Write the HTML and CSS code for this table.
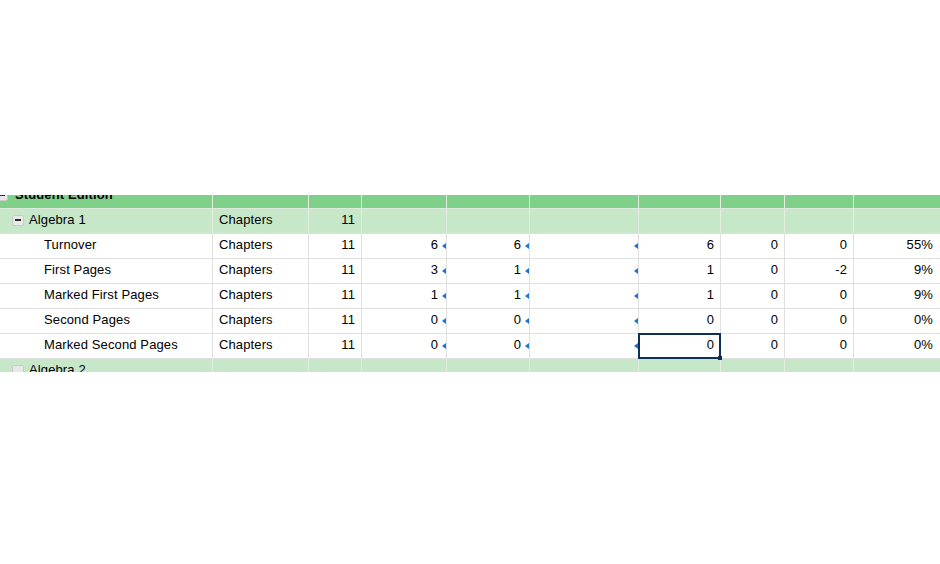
FILE: index.html
```html
<!DOCTYPE html>
<html>
<head>
<meta charset="utf-8">
<link rel="stylesheet" href="styles.css">
</head>
<body>
<div class="viewport">
  <div class="grid">
    <div class="row group1">
      <div class="c c1"><span class="lvl0"><span class="tog minus"></span><b>Student Edition</b></span></div>
      <div class="c c2"></div><div class="c c3"></div><div class="c c4"></div><div class="c c5"></div>
      <div class="c c6"></div><div class="c c7"></div><div class="c c8"></div><div class="c c9"></div><div class="c c10"></div>
    </div>
    <div class="row group2">
      <div class="c c1"><span class="lvl1"><span class="tog minus"></span>Algebra 1</span></div>
      <div class="c c2">Chapters</div><div class="c c3 num">11</div><div class="c c4"></div><div class="c c5"></div>
      <div class="c c6"></div><div class="c c7"></div><div class="c c8"></div><div class="c c9"></div><div class="c c10"></div>
    </div>
    <div class="row">
      <div class="c c1"><span class="lvl2">Turnover</span></div>
      <div class="c c2">Chapters</div><div class="c c3 num">11</div>
      <div class="c c4 num tri">6</div><div class="c c5 num tri">6</div><div class="c c6 num tri"></div>
      <div class="c c7 num">6</div><div class="c c8 num">0</div><div class="c c9 num">0</div><div class="c c10 num">55%</div>
    </div>
    <div class="row">
      <div class="c c1"><span class="lvl2">First Pages</span></div>
      <div class="c c2">Chapters</div><div class="c c3 num">11</div>
      <div class="c c4 num tri">3</div><div class="c c5 num tri">1</div><div class="c c6 num tri"></div>
      <div class="c c7 num">1</div><div class="c c8 num">0</div><div class="c c9 num">-2</div><div class="c c10 num">9%</div>
    </div>
    <div class="row">
      <div class="c c1"><span class="lvl2">Marked First Pages</span></div>
      <div class="c c2">Chapters</div><div class="c c3 num">11</div>
      <div class="c c4 num tri">1</div><div class="c c5 num tri">1</div><div class="c c6 num tri"></div>
      <div class="c c7 num">1</div><div class="c c8 num">0</div><div class="c c9 num">0</div><div class="c c10 num">9%</div>
    </div>
    <div class="row">
      <div class="c c1"><span class="lvl2">Second Pages</span></div>
      <div class="c c2">Chapters</div><div class="c c3 num">11</div>
      <div class="c c4 num tri">0</div><div class="c c5 num tri">0</div><div class="c c6 num tri"></div>
      <div class="c c7 num">0</div><div class="c c8 num">0</div><div class="c c9 num">0</div><div class="c c10 num">0%</div>
    </div>
    <div class="row">
      <div class="c c1"><span class="lvl2">Marked Second Pages</span></div>
      <div class="c c2">Chapters</div><div class="c c3 num">11</div>
      <div class="c c4 num tri">0</div><div class="c c5 num tri">0</div><div class="c c6 num tri"></div>
      <div class="c c7 num sel">0<span class="selbox"><span class="handle"></span></span></div><div class="c c8 num">0</div><div class="c c9 num">0</div><div class="c c10 num">0%</div>
    </div>
    <div class="row group2">
      <div class="c c1"><span class="lvl1"><span class="tog plus"></span>Algebra 2</span></div>
      <div class="c c2"></div><div class="c c3"></div><div class="c c4"></div><div class="c c5"></div>
      <div class="c c6"></div><div class="c c7"></div><div class="c c8"></div><div class="c c9"></div><div class="c c10"></div>
    </div>
  </div>
</div>
</body>
</html>
```
FILE: styles.css
```css
html, body {
  margin: 0;
  padding: 0;
  background: #ffffff;
}
body {
  font-family: "Liberation Sans", Arial, sans-serif;
  font-size: 13px;
  letter-spacing: 0.12px;
  color: #000000;
}
.viewport {
  margin-top: 195px;
  height: 177px;
  overflow: hidden;
}
.grid {
  margin-top: -11px;
  width: 940px;
}
.row {
  display: flex;
  height: 25px;
  box-sizing: border-box;
  border-bottom: 1px solid #e0e0e0;
  background: #ffffff;
}
.row.group1 { background: #7fd189; border-bottom-color: #dcebdc; }
.row.group2 { background: #c7e7c9; }
.c {
  box-sizing: border-box;
  height: 24px;
  line-height: 22px;
  border-right: 1px solid #e0e0e0;
  padding: 0 6px;
  white-space: nowrap;
  overflow: hidden;
  flex: none;
}
.group1 .c, .group2 .c { border-right-color: #e4ece4; }
.c1 { width: 213px; padding: 0 0 2px 0; display: flex; align-items: center; }
.c2 { width: 96px; }
.c3 { width: 53px; }
.c4 { width: 85px; }
.c5 { width: 83px; }
.c6 { width: 109px; }
.c7 { width: 82px; }
.c8 { width: 64px; }
.c9 { width: 69px; }
.c10 { flex: 1; padding-right: 7px; border-right: none; }
.num { text-align: right; }
.tri { position: relative; padding-right: 8px; }
.tri::after {
  content: "";
  position: absolute;
  right: 0;
  top: 9px;
  width: 0;
  height: 0;
  border-top: 3px solid transparent;
  border-bottom: 3px solid transparent;
  border-right: 4px solid #1a73d9;
}
.lvl0, .lvl1, .lvl2 {
  display: flex;
  align-items: center;
}
.lvl0 { margin-left: -4px; }
.lvl0 .tog { margin-right: 7px; }
.lvl1 { margin-left: 12px; }
.lvl2 { margin-left: 44px; }
.tog {
  position: relative;
  box-sizing: border-box;
  width: 12px;
  height: 11px;
  margin-right: 5px;
  margin-top: 1px;
  border: 1px solid #c9c9c9;
  border-radius: 2px;
  background: #e8e8e8;
  flex: none;
}
.tog::before {
  content: "";
  position: absolute;
  left: 2px;
  top: 3px;
  width: 6px;
  height: 2px;
  background: #2b2b2b;
}
.tog.plus::before { display: none; }
.sel {
  position: relative;
  overflow: visible;
}
.selbox {
  position: absolute;
  left: -1px;
  top: -1px;
  width: 83px;
  height: 26px;
  box-sizing: border-box;
  border: 2px solid #0e2f58;
  z-index: 2;
}
.handle {
  position: absolute;
  right: -3px;
  bottom: -3px;
  width: 4px;
  height: 4px;
  background: #0e2f58;
}
```
